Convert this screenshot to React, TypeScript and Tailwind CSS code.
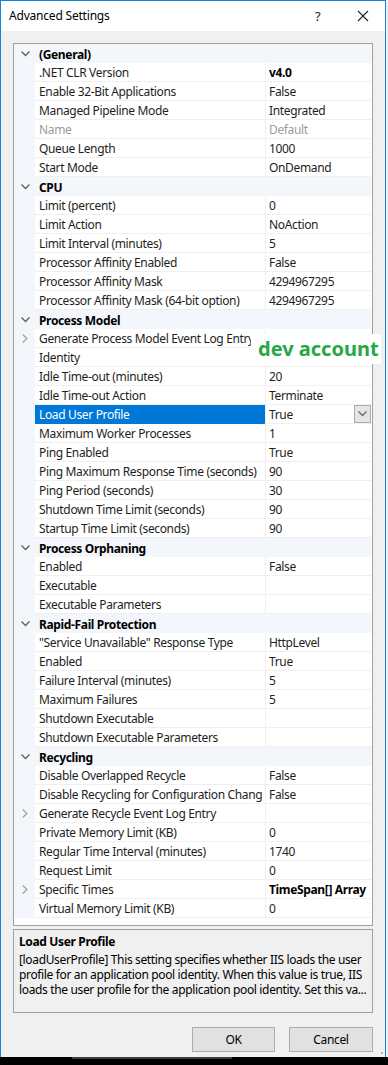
import React from "react";

type Row =
  | { t: "cat"; name: string }
  | { t: "row"; name: string; value?: string; bold?: boolean; expand?: boolean; disabled?: boolean; selected?: boolean };

const rows: Row[] = [
  { t: "cat", name: "(General)" },
  { t: "row", name: ".NET CLR Version", value: "v4.0", bold: true },
  { t: "row", name: "Enable 32-Bit Applications", value: "False" },
  { t: "row", name: "Managed Pipeline Mode", value: "Integrated" },
  { t: "row", name: "Name", value: "Default", disabled: true },
  { t: "row", name: "Queue Length", value: "1000" },
  { t: "row", name: "Start Mode", value: "OnDemand" },
  { t: "cat", name: "CPU" },
  { t: "row", name: "Limit (percent)", value: "0" },
  { t: "row", name: "Limit Action", value: "NoAction" },
  { t: "row", name: "Limit Interval (minutes)", value: "5" },
  { t: "row", name: "Processor Affinity Enabled", value: "False" },
  { t: "row", name: "Processor Affinity Mask", value: "4294967295" },
  { t: "row", name: "Processor Affinity Mask (64-bit option)", value: "4294967295" },
  { t: "cat", name: "Process Model" },
  { t: "row", name: "Generate Process Model Event Log Entry", value: "", expand: true },
  { t: "row", name: "Identity", value: "" },
  { t: "row", name: "Idle Time-out (minutes)", value: "20" },
  { t: "row", name: "Idle Time-out Action", value: "Terminate" },
  { t: "row", name: "Load User Profile", value: "True", selected: true },
  { t: "row", name: "Maximum Worker Processes", value: "1" },
  { t: "row", name: "Ping Enabled", value: "True" },
  { t: "row", name: "Ping Maximum Response Time (seconds)", value: "90" },
  { t: "row", name: "Ping Period (seconds)", value: "30" },
  { t: "row", name: "Shutdown Time Limit (seconds)", value: "90" },
  { t: "row", name: "Startup Time Limit (seconds)", value: "90" },
  { t: "cat", name: "Process Orphaning" },
  { t: "row", name: "Enabled", value: "False" },
  { t: "row", name: "Executable", value: "" },
  { t: "row", name: "Executable Parameters", value: "" },
  { t: "cat", name: "Rapid-Fail Protection" },
  { t: "row", name: "\"Service Unavailable\" Response Type", value: "HttpLevel" },
  { t: "row", name: "Enabled", value: "True" },
  { t: "row", name: "Failure Interval (minutes)", value: "5" },
  { t: "row", name: "Maximum Failures", value: "5" },
  { t: "row", name: "Shutdown Executable", value: "" },
  { t: "row", name: "Shutdown Executable Parameters", value: "" },
  { t: "cat", name: "Recycling" },
  { t: "row", name: "Disable Overlapped Recycle", value: "False" },
  { t: "row", name: "Disable Recycling for Configuration Chang", value: "False" },
  { t: "row", name: "Generate Recycle Event Log Entry", value: "", expand: true },
  { t: "row", name: "Private Memory Limit (KB)", value: "0" },
  { t: "row", name: "Regular Time Interval (minutes)", value: "1740" },
  { t: "row", name: "Request Limit", value: "0" },
  { t: "row", name: "Specific Times", value: "TimeSpan[] Array", bold: true, expand: true },
  { t: "row", name: "Virtual Memory Limit (KB)", value: "0" },
];

const font = { fontFamily: '"Noto Sans", "Segoe UI", sans-serif' };

function ChevDown({ color = "#5f5f5f" }: { color?: string }) {
  return (
    <svg width="9" height="6" viewBox="0 0 9 6">
      <path d="M0.5 0.5 L4.5 4.5 L8.5 0.5" fill="none" stroke={color} strokeWidth="1.3" />
    </svg>
  );
}

function ChevRight() {
  return (
    <svg width="6" height="9" viewBox="0 0 6 9">
      <path d="M0.8 0.5 L4.8 4.5 L0.8 8.5" fill="none" stroke="#a6a6a6" strokeWidth="1.4" />
    </svg>
  );
}

function GridRow({ r }: { r: Row }) {
  if (r.t === "cat") {
    return (
      <div className="flex h-[19px] bg-[#f3f6fb] items-center">
        <div className="w-[21px] flex justify-center pl-[1px]">
          <ChevDown />
        </div>
        <div className="pl-[4px] pt-[2px] font-bold text-[#000]">{r.name}</div>
      </div>
    );
  }
  return (
    <div className="flex h-[19px]">
      <div className="w-[21px] shrink-0 bg-[#f3f6fb] flex items-center justify-center">
        {r.expand ? <ChevRight /> : null}
      </div>
      <div
        className={
          "w-[230px] shrink-0 pl-[4px] pt-[2px] flex items-center overflow-hidden whitespace-nowrap border-b " +
          (r.selected ? "bg-[#0078d7] text-white border-[#0078d7]" : "bg-white border-[#f0f0f0] ") +
          (r.disabled ? " text-[#9b9b9b]" : r.selected ? "" : " text-[#1e1e1e]")
        }
      >
        {r.name}
      </div>
      <div className="w-[1px] shrink-0 bg-[#f0f0f0]" />
      <div
        className={
          "flex-1 pl-[3px] flex items-center overflow-hidden whitespace-nowrap bg-white border-b border-[#f0f0f0] " +
          (r.disabled ? "text-[#9b9b9b]" : "text-[#1e1e1e]") +
          (r.bold ? " font-bold text-black" : "")
        }
      >
        <span className="flex-1 pt-[2px]">{r.value}</span>
        {r.selected ? (
          <div className="w-[17px] h-[18px] mr-[1px] bg-[#e5e5e5] border border-[#adadad] flex items-center justify-center">
            <ChevDown color="#6a6a6a" />
          </div>
        ) : null}
      </div>
    </div>
  );
}

export default function App() {
  return (
    <div
      className="w-[388px] h-[1065px] bg-[#f0f0f0] flex flex-col text-[12px] tracking-[-0.35px] leading-none"
      style={font}
    >
      <div className="w-[386px] h-[1057px] border-x border-t border-[#1883d7] flex flex-col relative">
        <div className="h-[30px] bg-white flex items-center pl-[8px] text-[#000] shrink-0">
          <span className="flex-1 tracking-[-0.2px]">Advanced Settings</span>
          <span className="w-[10px] text-[13px] mr-[32px] text-[#222]">?</span>
          <svg width="12" height="12" viewBox="0 0 12 12" className="mr-[16px]">
            <path d="M1 1 L11 11 M11 1 L1 11" stroke="#222" strokeWidth="1.1" fill="none" />
          </svg>
        </div>
        <div className="flex-1 bg-[#f0f0f0] px-[12px] pt-[12px] flex flex-col">
          <div className="h-[883px] border border-[#a0a0a0] bg-white flex flex-col shrink-0">
            {rows.map((r, i) => (
              <GridRow key={i} r={r} />
            ))}
          </div>
          <div className="mt-[3px] h-[84px] border border-[#a0a0a0] px-[5px] pt-[4px] shrink-0 text-[#000]">
            <div className="font-bold h-[16px] flex items-center">Load User Profile</div>
            <div className="leading-[15px] mt-[2px] whitespace-nowrap">
              [loadUserProfile] This setting specifies whether IIS loads the user
              <br />
              profile for an application pool identity. When this value is true, IIS
              <br />
              loads the user profile for the application pool identity. Set this va...
            </div>
          </div>
          <div className="mt-[14px] flex justify-end gap-[14px]">
            <button className="w-[83px] h-[25px] bg-[#e1e1e1] border border-[#adadad] text-[#000]">OK</button>
            <button className="w-[84px] h-[25px] bg-[#e1e1e1] border border-[#adadad] text-[#000]">Cancel</button>
          </div>
        </div>
        <div className="absolute left-[250px] top-[333px] w-[130px] h-[30px] bg-white flex items-center pl-[7px]">
          <span
            className="text-[20px] font-bold text-[#27a844] leading-none tracking-normal"
            style={{ fontFamily: '"Noto Sans", sans-serif' }}
          >
            dev account
          </span>
        </div>
        <div className="absolute right-[2px] bottom-[3px] w-[2px] h-[2px] bg-[#b0b0b0]" />
      </div>
      <div className="h-[8px] bg-black relative">
        <div className="absolute left-[72px] top-0 w-[160px] h-[2px] bg-[#3c3c3c]" />
      </div>
    </div>
  );
}
